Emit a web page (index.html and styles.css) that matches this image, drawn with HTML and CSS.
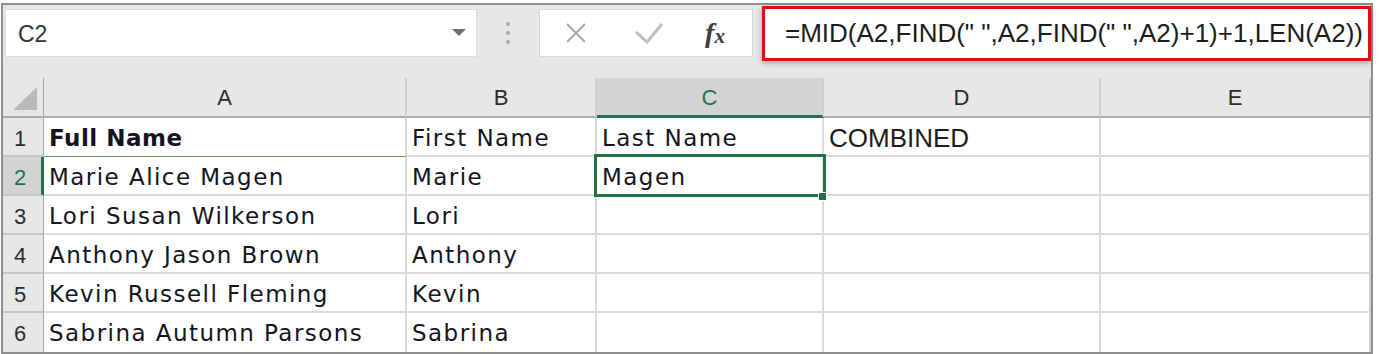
FILE: index.html
```html
<!DOCTYPE html>
<html lang="en">
<head>
<meta charset="utf-8">
<title>Excel MID formula</title>
<link rel="stylesheet" href="styles.css">
</head>
<body>
<div class="frame">
  <div class="toolbar">
    <div class="namebox">
      <span class="ref">C2</span>
      <span class="caret"></span>
    </div>
    <div class="grip"><i></i><i></i><i></i></div>
    <div class="btns">
      <span class="btn">
        <svg width="22" height="20" viewBox="0 0 22 20"><path d="M2 1L20 19M20 1L2 19" stroke="#a9a9a9" stroke-width="2" fill="none"/></svg>
      </span>
      <span class="btn">
        <svg width="28" height="22" viewBox="0 0 28 22"><path d="M1 10L12 20L27 2" stroke="#bdbdbd" stroke-width="3" fill="none"/></svg>
      </span>
      <span class="btn fx"><i>f</i><i class="x">x</i></span>
    </div>
    <div class="formula">=MID(A2,FIND(" ",A2,FIND(" ",A2)+1)+1,LEN(A2))</div>
  </div>
  <div class="sheet">
    <div class="corner"><span class="tri"></span></div>
    <div class="colhdr">A</div>
    <div class="colhdr">B</div>
    <div class="colhdr active">C</div>
    <div class="colhdr">D</div>
    <div class="colhdr last">E</div>

    <div class="rowhdr">1</div>
    <div class="cell bold a1">Full Name</div>
    <div class="cell">First Name</div>
    <div class="cell">Last Name</div>
    <div class="cell alt">COMBINED</div>
    <div class="cell last"></div>

    <div class="rowhdr active">2</div>
    <div class="cell">Marie Alice Magen</div>
    <div class="cell">Marie</div>
    <div class="cell selected">Magen<span class="sel"></span><span class="handle"></span></div>
    <div class="cell"></div>
    <div class="cell last"></div>

    <div class="rowhdr">3</div>
    <div class="cell">Lori Susan Wilkerson</div>
    <div class="cell">Lori</div>
    <div class="cell"></div>
    <div class="cell"></div>
    <div class="cell last"></div>

    <div class="rowhdr">4</div>
    <div class="cell">Anthony Jason Brown</div>
    <div class="cell">Anthony</div>
    <div class="cell"></div>
    <div class="cell"></div>
    <div class="cell last"></div>

    <div class="rowhdr">5</div>
    <div class="cell">Kevin Russell Fleming</div>
    <div class="cell">Kevin</div>
    <div class="cell"></div>
    <div class="cell"></div>
    <div class="cell last"></div>

    <div class="rowhdr lastrow">6</div>
    <div class="cell lastrow">Sabrina Autumn Parsons</div>
    <div class="cell lastrow">Sabrina</div>
    <div class="cell lastrow"></div>
    <div class="cell lastrow"></div>
    <div class="cell last lastrow"></div>
  </div>
</div>
</body>
</html>
```

FILE: styles.css
```css
* { box-sizing: border-box; }
html, body { margin: 0; padding: 0; background: #ffffff; }
body { width: 1379px; height: 354px; overflow: hidden; }

.frame {
  margin: 3px 0 0 1px;
  width: 1372px;
  height: 351px;
  border: 2px solid #8f8f8f;
  background: #e7e7e7;
  display: flex;
  flex-direction: column;
}

/* ---------- toolbar ---------- */
.toolbar {
  height: 73px;
  flex: 0 0 73px;
  display: flex;
  align-items: flex-start;
  background: #e7e7e7;
}
.namebox {
  margin: 4px 0 0 2px;
  width: 472px;
  height: 48px;
  background: #ffffff;
  border: 1px solid #dcdcdc;
  display: flex;
  align-items: center;
  justify-content: space-between;
  padding: 2px 10px 0 12px;
}
.ref {
  font-family: "Liberation Sans", Arial, sans-serif;
  font-size: 23px;
  color: #333333;
}
.caret {
  width: 0; height: 0;
  border-left: 7px solid transparent;
  border-right: 7px solid transparent;
  border-top: 7px solid #707070;
  margin-bottom: 4px;
}
.grip {
  width: 62px;
  height: 48px;
  margin-top: 4px;
  display: flex;
  flex-direction: column;
  align-items: center;
  justify-content: center;
  gap: 5px;
}
.grip i {
  display: block;
  width: 4px; height: 4px;
  border-radius: 50%;
  background: #a8a8a8;
}
.btns {
  margin-top: 4px;
  width: 214px;
  height: 48px;
  background: #ffffff;
  border: 1px solid #d8d8d8;
  display: grid;
  grid-template-columns: 72px 74px 1fr;
  align-items: center;
}
.btn {
  display: flex;
  justify-content: center;
  align-items: center;
}
.fx {
  font-family: "Liberation Serif", "Times New Roman", serif;
  color: #3d3d3d;
  font-size: 28px;
  font-weight: bold;
  padding-right: 8px;
  line-height: 30px;
}
.fx .x { font-size: 21px; margin-top: 5px; margin-left: 0; }
.formula {
  margin: 1px 0 0 9px;
  width: 609px;
  height: 55px;
  background: #ffffff;
  border: 3px solid #e30b0b;
  box-shadow: 0 2px 6px rgba(0,0,0,0.28);
  font-family: "Liberation Sans", Arial, sans-serif;
  font-size: 26px;
  line-height: 49px;
  color: #1c1c1c;
  padding-left: 20px;
  white-space: nowrap;
  overflow: hidden;
}

/* ---------- sheet ---------- */
.sheet {
  display: grid;
  grid-template-columns: 41px 363px 190px 227px 277px 1fr;
  grid-template-rows: 40px repeat(6, 39px);
  background: #ffffff;
}
.corner {
  background: #e7e7e7;
  border-right: 1px solid #a6a6a6;
  border-bottom: 2px solid #ababab;
  display: flex;
  align-items: flex-end;
  justify-content: flex-end;
  padding: 0 6px 6px 0;
}
.tri {
  width: 0; height: 0;
  border-left: 24px solid transparent;
  border-bottom: 23px solid #b9b9b9;
}
.colhdr {
  background: #e7e7e7;
  border-right: 2px solid #cfcfcf;
  border-bottom: 2px solid #ababab;
  text-align: center;
  font-family: "Liberation Sans", Arial, sans-serif;
  font-size: 22px;
  color: #2b2b2b;
  padding-top: 2px;
  line-height: 36px;
}
.colhdr.active {
  background: #d3d3d3;
  color: #217346;
  border-bottom: 3px solid #217346;
}
.colhdr.last { border-right: 2px solid #c4c4c4; }

.rowhdr {
  background: #e7e7e7;
  border-right: 1px solid #a6a6a6;
  border-bottom: 2px solid #c6c6c6;
  font-family: "Liberation Sans", Arial, sans-serif;
  font-size: 22px;
  color: #2b2b2b;
  padding: 4px 0 0 11px;
  line-height: 33px;
}
.rowhdr.active {
  background: #d3d3d3;
  color: #217346;
  border-right: 3px solid #217346;
}

.cell {
  border-right: 2px solid #dadada;
  border-bottom: 2px solid #dadada;
  font-family: "DejaVu Sans", "Liberation Sans", sans-serif;
  font-size: 23px;
  letter-spacing: 1.45px;
  color: #14141e;
  padding: 4px 0 0 5px;
  line-height: 33px;
  white-space: nowrap;
}
.cell.bold { font-weight: bold; letter-spacing: 0.5px; }
.cell.a1 { border-bottom-color: #5e9e6a; border-bottom-width: 1px; }
.cell.alt {
  font-family: "Liberation Sans", Arial, sans-serif;
  font-size: 26px;
  letter-spacing: 0;
  color: #1c1c1c;
}
.cell.last { border-right: 2px solid #cfcfcf; }
.lastrow { border-bottom: none; }

.cell.selected { position: relative; }
.sel {
  position: absolute;
  left: -3px; top: -3px;
  width: 232px; height: 43px;
  border: 3px solid #217346;
  pointer-events: none;
}
.handle {
  position: absolute;
  left: 221px; top: 35px;
  width: 9px; height: 9px;
  background: #217346;
  border: 1px solid #ffffff;
}
```
